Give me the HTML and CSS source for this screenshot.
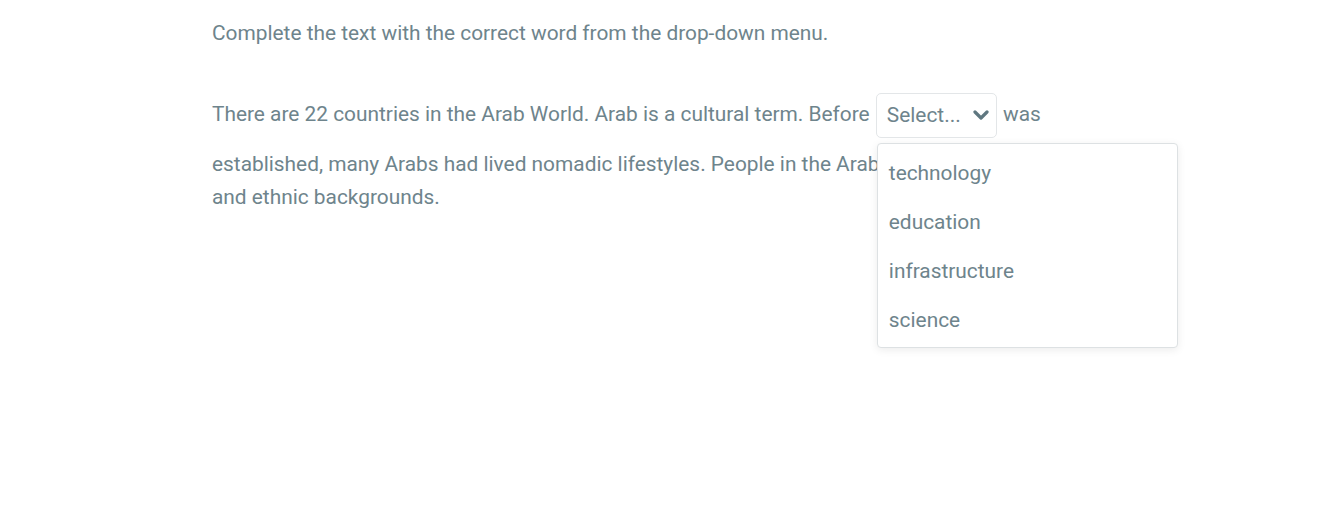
FILE: index.html
```html
<!DOCTYPE html>
<html lang="en">
<head>
<meta charset="utf-8">
<title>Fill in the blank</title>
<link rel="stylesheet" href="styles.css">
</head>
<body>
<main class="page">
  <p class="instructions">Complete the text with the correct word from the drop-down menu.</p>
  <p class="passage">There are 22 countries in the Arab World. Arab is a cultural term. Before <span class="select-wrap"><span class="select"><span class="select-label">Select...</span><svg class="chevron" width="16" height="11" viewBox="0 0 16 11" aria-hidden="true"><path d="M2 2 L8 8 L14 2" fill="none" stroke="currentColor" stroke-width="3.2" stroke-linecap="round" stroke-linejoin="round"/></svg></span><span class="menu"><span class="option">technology</span><span class="option">education</span><span class="option">infrastructure</span><span class="option">science</span></span></span> was established, many Arabs had lived nomadic lifestyles. People in the Arab World have religious<br>and ethnic backgrounds.</p>
</main>
</body>
</html>
```
FILE: styles.css
```css
html, body {
  margin: 0;
  padding: 0;
  background: #ffffff;
}
html, body {
  min-height: 100vh;
}
body {
  font-family: Roboto, "Liberation Sans", sans-serif;
  font-size: 20.86px;
  line-height: 33px;
  color: #6e848c;
}
.page {
  width: 906px;
  margin: 0 auto;
  padding-top: 17px;
  min-height: 480px;
}
.instructions {
  margin: 0 0 33px;
}
.passage {
  margin: 0;
}
.select-wrap {
  position: relative;
  display: inline-block;
  vertical-align: middle;
  margin: 10px 1px;
}
.select {
  display: inline-flex;
  align-items: center;
  box-sizing: border-box;
  width: 121px;
  height: 45px;
  padding: 0 7px 0 10px;
  border: 1px solid #e3e6e8;
  border-radius: 5px;
  justify-content: space-between;
  background: #fff;
}
.chevron {
  color: #5f7780;
}
.menu {
  position: absolute;
  left: 1px;
  top: 50px;
  width: 301px;
  box-sizing: border-box;
  display: flex;
  flex-direction: column;
  padding: 5px 0 2px;
  background: #fff;
  border: 1px solid #dde1e3;
  border-radius: 4px;
  box-shadow: 0 2px 8px rgba(0, 0, 0, 0.08);
  z-index: 2;
}
.option {
  padding: 8px 11px;
  line-height: 33px;
  white-space: nowrap;
}
```
